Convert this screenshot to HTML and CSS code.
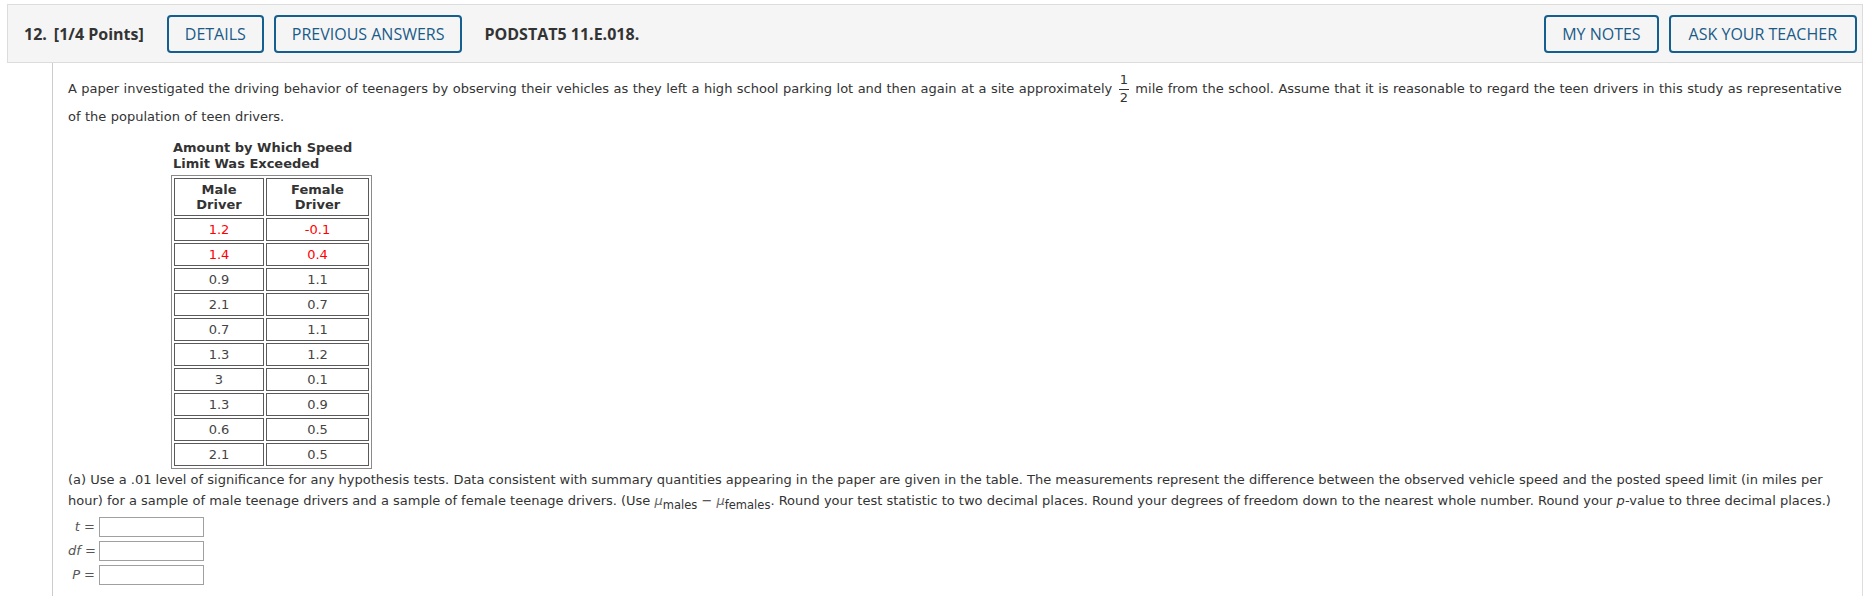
FILE: index.html
```html
<!DOCTYPE html>
<html lang="en">
<head>
<meta charset="utf-8">
<title>Question 12</title>
<link rel="stylesheet" href="styles.css">
</head>
<body>
<div class="page">
  <div class="qhead">
    <span class="qnum">12.</span>
    <span class="qpts">[1/4 Points]</span>
    <span class="btn">DETAILS</span>
    <span class="btn btn-prev">PREVIOUS ANSWERS</span>
    <span class="qcode">PODSTAT5 11.E.018.</span>
    <span class="spacer"></span>
    <span class="btn">MY NOTES</span>
    <span class="btn btn-last">ASK YOUR TEACHER</span>
  </div>
  <div class="qbody">
    <p class="intro">A paper investigated the driving behavior of teenagers by observing their vehicles as they left a high school parking lot and then again at a site approximately <span class="frac"><span class="fnum">1</span><span class="fden">2</span></span> mile from the school. Assume that it is reasonable to regard the teen drivers in this study as representative of the population of teen drivers.</p>
    <div class="tcap">Amount by Which Speed<br>Limit Was Exceeded</div>
    <table class="data">
      <tr><th class="c1">Male<br>Driver</th><th class="c2">Female<br>Driver</th></tr>
      <tr class="red"><td>1.2</td><td>-0.1</td></tr>
      <tr class="red"><td>1.4</td><td>0.4</td></tr>
      <tr><td>0.9</td><td>1.1</td></tr>
      <tr><td>2.1</td><td>0.7</td></tr>
      <tr><td>0.7</td><td>1.1</td></tr>
      <tr><td>1.3</td><td>1.2</td></tr>
      <tr><td>3</td><td>0.1</td></tr>
      <tr><td>1.3</td><td>0.9</td></tr>
      <tr><td>0.6</td><td>0.5</td></tr>
      <tr><td>2.1</td><td>0.5</td></tr>
    </table>
    <p class="parta">(a) Use a .01 level of significance for any hypothesis tests. Data consistent with summary quantities appearing in the paper are given in the table. The measurements represent the difference between the observed vehicle speed and the posted speed limit (in miles per hour) for a sample of male teenage drivers and a sample of female teenage drivers. (Use <span class="mu">μ</span><span class="sub">males</span> − <span class="mu">μ</span><span class="sub">females</span>. Round your test statistic to two decimal places. Round your degrees of freedom down to the nearest whole number. Round your <i>p</i>-value to three decimal places.)</p>
    <div class="answers">
      <label class="lbl"><i>t</i> =</label><span class="box"></span>
      <label class="lbl"><i>df</i> =</label><span class="box"></span>
      <label class="lbl"><i>P</i> =</label><span class="box"></span>
    </div>
  </div>
</div>
</body>
</html>
```
FILE: styles.css
```css
html, body {
  margin: 0;
  background: #ffffff;
}
body {
  font-family: "DejaVu Sans", Verdana, sans-serif;
  color: #333333;
}
.page {
  padding: 4px 9px 0 7px;
}
.qhead {
  display: flex;
  align-items: center;
  height: 57px;
  background: #f5f5f5;
  border: 1px solid #dcdcdc;
  padding: 0 5px 0 16px;
  font-family: "Open Sans", "Liberation Sans", sans-serif;
  font-size: 16px;
  color: #333333;
}
.qnum {
  font-weight: 700;
  margin-right: 7px;
}
.qpts {
  font-weight: 700;
  margin-right: 23px;
}
.btn {
  display: inline-flex;
  align-items: center;
  height: 34px;
  padding: 0 16px;
  border: 2px solid #145f8e;
  border-radius: 4px;
  color: #1a5b88;
  font-size: 16px;
  font-weight: 500;
  margin-right: 10px;
}
.btn-last {
  margin-right: 0;
  padding: 0 18px;
}
.qcode {
  font-weight: 700;
  margin-left: 12px;
}
.spacer {
  flex: 1;
}
.qbody {
  margin-left: 45px;
  border-left: 1px solid #cccccc;
  border-right: 1px solid #dddddd;
  padding: 9px 14px 14px 15px;
  font-size: 13px;
}
.intro, .parta {
  margin: 0;
  line-height: 21px;
}
.intro {
  word-spacing: 0.3px;
  margin-right: 2px;
}
.frac {
  display: inline-block;
  vertical-align: middle;
  text-align: center;
  font-size: 13px;
  line-height: 16px;
  margin: 0 2px;
  word-spacing: 0;
}
.fnum, .fden {
  display: block;
  padding: 0 1px;
}
.fnum {
  border-bottom: 1px solid #333333;
  padding-bottom: 1px;
}
.tcap {
  margin: 13px 0 3px 105px;
  font-weight: 700;
  font-size: 13px;
  line-height: 16px;
}
.data {
  margin-left: 103px;
  border: 1px solid #8a8a8a;
  border-spacing: 2px;
  font-size: 13px;
}
.data th, .data td {
  border: 1px solid #5a5a5a;
  text-align: center;
  padding: 0;
}
.data th {
  height: 36px;
  line-height: 15px;
  font-weight: 700;
}
.data td {
  height: 21px;
  line-height: 21px;
  color: #444444;
}
.data .c1 { width: 88px; }
.data .c2 { width: 101px; }
.data tr.red td {
  color: #ff0000;
}
.mu {
  font-style: italic;
  color: #666666;
}
.sub {
  font-size: 11.5px;
  line-height: 0;
  vertical-align: -4px;
}
.answers {
  display: grid;
  grid-template-columns: 27px 105px;
  column-gap: 4px;
  row-gap: 4px;
  margin-top: 6px;
  align-items: center;
}
.lbl {
  text-align: right;
  color: #555555;
  font-size: 13px;
  line-height: 16px;
  white-space: nowrap;
}
.box {
  height: 18px;
  border: 1px solid #a0a0a0;
  background: #ffffff;
}
```
